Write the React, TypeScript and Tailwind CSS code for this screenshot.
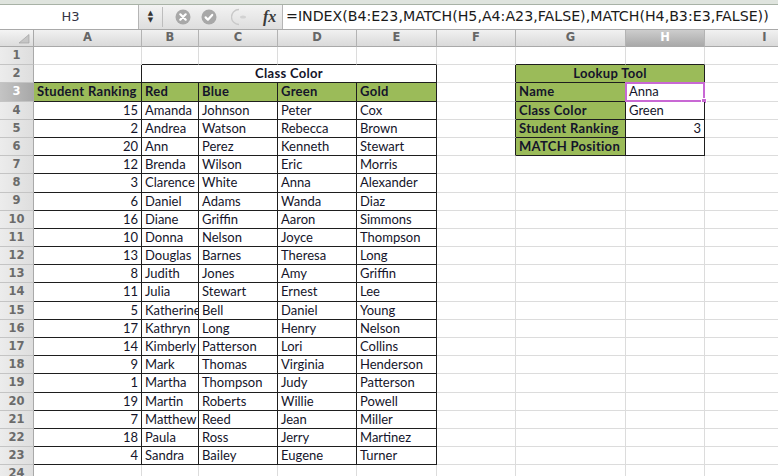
import type { ReactNode } from "react";

const rows: [number, string, string, string, string][] = [
  [15, "Amanda", "Johnson", "Peter", "Cox"],
  [2, "Andrea", "Watson", "Rebecca", "Brown"],
  [20, "Ann", "Perez", "Kenneth", "Stewart"],
  [12, "Brenda", "Wilson", "Eric", "Morris"],
  [3, "Clarence", "White", "Anna", "Alexander"],
  [6, "Daniel", "Adams", "Wanda", "Diaz"],
  [16, "Diane", "Griffin", "Aaron", "Simmons"],
  [10, "Donna", "Nelson", "Joyce", "Thompson"],
  [13, "Douglas", "Barnes", "Theresa", "Long"],
  [8, "Judith", "Jones", "Amy", "Griffin"],
  [11, "Julia", "Stewart", "Ernest", "Lee"],
  [5, "Katherine", "Bell", "Daniel", "Young"],
  [17, "Kathryn", "Long", "Henry", "Nelson"],
  [14, "Kimberly", "Patterson", "Lori", "Collins"],
  [9, "Mark", "Thomas", "Virginia", "Henderson"],
  [1, "Martha", "Thompson", "Judy", "Patterson"],
  [19, "Martin", "Roberts", "Willie", "Powell"],
  [7, "Matthew", "Reed", "Jean", "Miller"],
  [18, "Paula", "Ross", "Jerry", "Martinez"],
  [4, "Sandra", "Bailey", "Eugene", "Turner"],
];

const lookup: Record<number, [string, string, boolean]> = {
  3: ["Name", "Anna", false],
  4: ["Class Color", "Green", false],
  5: ["Student Ranking", "3", true],
  6: ["MATCH Position", "", false],
};

function Cell({
  w,
  r = false,
  b = false,
  green = false,
  bold = false,
  align = "left",
  className = "",
  children,
}: {
  w: string;
  r?: boolean;
  b?: boolean;
  green?: boolean;
  bold?: boolean;
  align?: "left" | "right" | "center";
  className?: string;
  children?: ReactNode;
}) {
  return (
    <div
      className={`${w} h-full shrink-0 whitespace-nowrap border-r border-b px-[3px] leading-[17px] ${
        r ? "border-r-[#1e1e1e]" : "border-r-[#dcdcdc]"
      } ${b ? "border-b-[#1e1e1e]" : "border-b-[#dcdcdc]"} ${green ? "bg-[#9bbb59]" : "bg-white"} ${
        bold ? "font-bold tracking-[0.3px]" : ""
      } ${align === "right" ? "text-right" : align === "center" ? "text-center" : "text-left"} ${className}`}
    >
      {children}
    </div>
  );
}

function RowHead({ n, active = false }: { n: number; active?: boolean }) {
  return (
    <div
      className={`flex h-full w-[34px] shrink-0 items-center justify-center border-r border-b border-r-[#a9a9a9] border-b-[#c4c4c4] bg-gradient-to-r text-[11.5px] font-bold ${
        active ? "from-[#c4c4c4] to-[#a8a8a8] text-white" : "from-[#ececec] to-[#dedede] text-[#6b6b6b]"
      }`}
      style={{ fontFamily: '"DejaVu Sans", sans-serif' }}
    >
      {n}
    </div>
  );
}

function ColHead({ w, label, active = false }: { w: string; label: string; active?: boolean }) {
  return (
    <div
      className={`flex h-full ${w} shrink-0 items-center justify-center border-r border-b border-r-[#b3b3b3] border-b-[#a9a9a9] bg-gradient-to-b text-[11.5px] font-bold ${
        active ? "from-[#cdcdcd] to-[#a9a9a9] text-white" : "from-[#f1f1f1] to-[#dadada] text-[#666]"
      }`}
    >
      {label}
    </div>
  );
}

function Row({ children }: { children: ReactNode }) {
  return <div className="flex h-[18.2px]">{children}</div>;
}

function FormulaBar() {
  return (
    <div className="shrink-0">
      <div className="h-[5px] border-b border-[#a8b2a6] bg-[#dfe4de]" />
      <div
        className="flex h-[25px] border-b border-[#a9a9a9]"
        style={{ fontFamily: '"DejaVu Sans", sans-serif' }}
      >
        <div className="flex w-[139px] items-center justify-center border-r border-[#b5b5b5] bg-white pl-[3px] text-[13px] text-[#334]">
          H3
        </div>
        <div className="flex w-[143px] items-center bg-gradient-to-b from-[#f3f3f3] to-[#dedede]">
          <div className="flex w-[23px] flex-col items-center justify-center text-[7px] leading-[7px] text-[#333]">
            <span>▲</span>
            <span>▼</span>
          </div>
          <div className="h-[20px] w-px bg-[#bdbdbd]" />
          <div className="ml-[12px] flex items-center gap-[10px]">
            <svg width="16" height="16" viewBox="0 0 16 16">
              <circle cx="8" cy="8" r="7.5" fill="#a8a8a8" />
              <path d="M5.3 5.3l5.4 5.4M10.7 5.3l-5.4 5.4" stroke="#fff" strokeWidth="2.2" strokeLinecap="round" />
            </svg>
            <svg width="16" height="16" viewBox="0 0 16 16">
              <circle cx="8" cy="8" r="7.5" fill="#a8a8a8" />
              <path d="M4.6 8.4l2.3 2.3 4.3-4.8" stroke="#fff" strokeWidth="2.2" fill="none" strokeLinecap="round" strokeLinejoin="round" />
            </svg>
            <svg width="20" height="18" viewBox="0 0 20 18" className="ml-[4px]">
              <path d="M8 1.5 A7.5 7.5 0 0 0 8 16.5" stroke="#c9c9c9" strokeWidth="1.3" fill="none" />
              <ellipse cx="12" cy="9" rx="3" ry="1.6" fill="#d2d2d2" />
            </svg>
            <span
              className="ml-[2px] text-[16px] font-bold italic text-[#3a3a3a]"
              style={{ fontFamily: '"Liberation Serif", serif' }}
            >
              fx
            </span>
          </div>
        </div>
        <div className="flex flex-1 items-center border-l border-[#b5b5b5] bg-white pl-[3px] text-[14.2px] text-[#1a1a1a]">
          =INDEX(B4:E23,MATCH(H5,A4:A23,FALSE),MATCH(H4,B3:E3,FALSE))
        </div>
      </div>
    </div>
  );
}

export default function App() {
  return (
    <div className="h-[476px] w-[778px] overflow-hidden bg-white">
      <FormulaBar />

      {/* column headers */}
      <div className="flex h-[17px]" style={{ fontFamily: '"DejaVu Sans", sans-serif' }}>
        <div className="relative h-full w-[34px] shrink-0 border-r border-b border-r-[#a9a9a9] border-b-[#a9a9a9] bg-gradient-to-b from-[#f4f4f4] to-[#dcdcdc]">
          <svg width="12" height="10" viewBox="0 0 12 10" className="absolute right-[3px] bottom-[2px]">
            <path d="M11 0.5 L11 9 L1 9 Z" fill="#c6c6c6" stroke="#9c9c9c" strokeWidth="0.6" />
          </svg>
        </div>
        <ColHead w="w-[108px]" label="A" />
        <ColHead w="w-[57px]" label="B" />
        <ColHead w="w-[79px]" label="C" />
        <ColHead w="w-[79px]" label="D" />
        <ColHead w="w-[80px]" label="E" />
        <ColHead w="w-[79px]" label="F" />
        <ColHead w="w-[110px]" label="G" />
        <ColHead w="w-[79px]" label="H" active />
        <ColHead w="w-[120px]" label="I" />
      </div>

      <div className="text-[13px] text-[#14142a]" style={{ fontFamily: "Lato, sans-serif" }}>
        <Row>
          <RowHead n={1} />
          <Cell w="w-[108px]" />
          <Cell w="w-[57px]" b />
          <Cell w="w-[79px]" b />
          <Cell w="w-[79px]" b />
          <Cell w="w-[80px]" b />
          <Cell w="w-[79px]" />
          <Cell w="w-[110px]" b />
          <Cell w="w-[79px]" b />
          <Cell w="w-[120px]" />
        </Row>
        <Row>
          <RowHead n={2} />
          <Cell w="w-[108px]" r b />
          <Cell w="w-[295px]" r b bold align="center">
            Class Color
          </Cell>
          <Cell w="w-[79px]" r />
          <Cell w="w-[189px]" r b green bold align="center">
            Lookup Tool
          </Cell>
          <Cell w="w-[120px]" />
        </Row>
        {[3, 4, 5, 6].map((n) => {
          const data = n === 3 ? null : rows[n - 4];
          const [label, value, right] = lookup[n];
          return (
            <Row key={n}>
              <RowHead n={n} active={n === 3} />
              {data ? (
                <>
                  <Cell w="w-[108px]" r b align="right">
                    {data[0]}
                  </Cell>
                  <Cell w="w-[57px]" r b className="overflow-hidden">
                    {data[1]}
                  </Cell>
                  <Cell w="w-[79px]" r b>
                    {data[2]}
                  </Cell>
                  <Cell w="w-[79px]" r b>
                    {data[3]}
                  </Cell>
                  <Cell w="w-[80px]" r b>
                    {data[4]}
                  </Cell>
                </>
              ) : (
                <>
                  <Cell w="w-[108px]" r b green bold>
                    Student Ranking
                  </Cell>
                  <Cell w="w-[57px]" r b green bold>
                    Red
                  </Cell>
                  <Cell w="w-[79px]" r b green bold>
                    Blue
                  </Cell>
                  <Cell w="w-[79px]" r b green bold>
                    Green
                  </Cell>
                  <Cell w="w-[80px]" r b green bold>
                    Gold
                  </Cell>
                </>
              )}
              <Cell w="w-[79px]" r />
              <Cell w="w-[110px]" r b green bold>
                {label}
              </Cell>
              <Cell w="w-[79px]" r b align={right ? "right" : "left"} className="relative">
                {value}
                {n === 3 && (
                  <div className="absolute -top-[1px] -left-[1px] -right-[1px] -bottom-[1px] border-2 border-[#c868d4]">
                    <div className="absolute -right-[4px] -bottom-[4px] h-[6px] w-[6px] border border-white bg-[#c868d4]" />
                  </div>
                )}
              </Cell>
              <Cell w="w-[120px]" />
            </Row>
          );
        })}
        {rows.slice(3).map((d, i) => {
          const n = i + 7;
          return (
            <Row key={n}>
              <RowHead n={n} />
              <Cell w="w-[108px]" r b align="right">
                {d[0]}
              </Cell>
              <Cell w="w-[57px]" r b className="overflow-hidden">
                {d[1]}
              </Cell>
              <Cell w="w-[79px]" r b>
                {d[2]}
              </Cell>
              <Cell w="w-[79px]" r b>
                {d[3]}
              </Cell>
              <Cell w="w-[80px]" r b>
                {d[4]}
              </Cell>
              <Cell w="w-[79px]" />
              <Cell w="w-[110px]" />
              <Cell w="w-[79px]" />
              <Cell w="w-[120px]" />
            </Row>
          );
        })}
        <Row>
          <RowHead n={24} />
          <Cell w="w-[108px]" />
          <Cell w="w-[57px]" />
          <Cell w="w-[79px]" />
          <Cell w="w-[79px]" />
          <Cell w="w-[80px]" />
          <Cell w="w-[79px]" />
          <Cell w="w-[110px]" />
          <Cell w="w-[79px]" />
          <Cell w="w-[120px]" />
        </Row>
      </div>
    </div>
  );
}
